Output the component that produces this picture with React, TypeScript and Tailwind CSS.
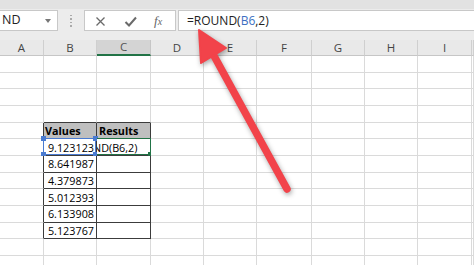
import React from "react";

const cols = ["A", "B", "C", "D", "E", "F", "G", "H", "I", "J"];
const gridCols = "grid grid-rows-1 grid-cols-[44px_53px_54px_53px_53px_55px_53px_53px_54px_1fr]";

const values = ["9.123123", "8.641987", "4.379873", "5.012393", "6.133908", "5.123767"];

function Handle({ pos, color }: { pos: string; color: string }) {
  return <span className={`absolute w-[5px] h-[5px] ${color} ${pos}`} />;
}

function Cell({ r, c }: { r: number; c: number }) {
  const inTableCol = c === 1 || c === 2;
  const darkBottom = inTableCol && r >= 3 && r <= 10;
  const darkRight = c <= 2 && r >= 4 && r <= 10;
  const headerFill = r === 4 && inTableCol;

  let content: React.ReactNode = null;
  if (r === 4 && c === 1) content = <span className="pl-[1px] font-bold">Values</span>;
  if (r === 4 && c === 2) content = <span className="pl-[2px] font-bold">Results</span>;
  if (r >= 5 && r <= 10 && c === 1)
    content = <span className="ml-auto pr-[2px]">{values[r - 5]}</span>;
  if (r === 5 && c === 2) content = <span className="ml-[-4px] whitespace-nowrap">ND(B6,2)</span>;

  return (
    <div
      className={[
        "relative flex min-h-0 items-center overflow-visible border-r border-b text-[10.8px] leading-[15px] text-black",
        darkBottom ? "border-b-[#3c3c3c]" : "border-b-[#dadada]",
        darkRight ? "border-r-[#3c3c3c]" : "border-r-[#dadada]",
        headerFill ? "bg-[#bfbfbf]" : "bg-white",
      ].join(" ")}
    >
      <div className="flex w-full items-center overflow-hidden">{content}</div>
      {r === 5 && c === 1 && (
        <div className="pointer-events-none absolute -left-[1px] -top-[1px] h-[calc(100%+1px)] w-[calc(100%+1px)] border-[1.5px] border-[#4a7bd1]">
          <Handle pos="-left-[3px] -top-[3px]" color="bg-[#4a7bd1]" />
          <Handle pos="-right-[3px] -top-[3px]" color="bg-[#4a7bd1]" />
          <Handle pos="-left-[3px] -bottom-[3px]" color="bg-[#4a7bd1]" />
          <Handle pos="-right-[3px] -bottom-[3px]" color="bg-[#4a7bd1]" />
        </div>
      )}
      {r === 5 && c === 2 && (
        <div className="pointer-events-none absolute left-0 -top-[1px] h-[calc(100%+1px)] w-[calc(100%+1px)] border-[1.5px] border-l-0 border-[#217346]">
          <Handle pos="-right-[3px] -bottom-[3px]" color="bg-[#217346]" />
        </div>
      )}
    </div>
  );
}

export default function App() {
  const rows = Array.from({ length: 13 }, (_, i) => i);

  return (
    <div className="relative h-[265px] w-[474px] overflow-hidden bg-white font-['Open_Sans',sans-serif]">
      {/* Formula bar */}
      <div className="h-[40px] bg-[#ececec]">
        <div className="h-[9px] bg-[#e2e2e2]" />
        <div className="flex h-[22px] items-stretch pt-[1px]">
          <div className="flex w-[58px] items-center justify-between border border-l-0 border-[#c8c8c8] bg-white pl-[2px] pr-[6px]">
            <span className="text-[12.5px] text-[#222]">ND</span>
            <span className="mt-[1px] block h-0 w-0 border-x-[3px] border-t-[4px] border-x-transparent border-t-[#777]" />
          </div>
          <div className="flex w-[26px] flex-col items-center justify-center gap-[2px]">
            <span className="h-[1.5px] w-[1.5px] bg-[#aaa]" />
            <span className="h-[1.5px] w-[1.5px] bg-[#aaa]" />
            <span className="h-[1.5px] w-[1.5px] bg-[#aaa]" />
            <span className="h-[1.5px] w-[1.5px] bg-[#aaa]" />
          </div>
          <div className="flex w-[92px] items-center border border-[#c8c8c8] bg-white">
            <svg width="30" height="20" viewBox="0 0 30 20" className="ml-[1px]">
              <path d="M10.5 6.5 L18.5 14.5 M18.5 6.5 L10.5 14.5" stroke="#6a6a6a" strokeWidth="1.3" />
            </svg>
            <svg width="30" height="20" viewBox="0 0 30 20">
              <path d="M9.5 11 L13 14.5 L20 6.5" stroke="#6a6a6a" strokeWidth="2" fill="none" />
            </svg>
            <span className="ml-[8px] font-['Liberation_Serif',serif] text-[13px] italic text-[#666]">
              f<span className="text-[10px]">x</span>
            </span>
          </div>
          <div className="ml-[2px] flex flex-1 items-center border border-r-0 border-[#c8c8c8] bg-white pl-[8px]">
            <span className="text-[12px] text-[#222]">
              =ROUND(<span className="text-[#3d6fc2]">B6</span>,2)
            </span>
          </div>
        </div>
      </div>

      {/* Column headers */}
      <div className={`${gridCols} h-[16px] bg-[#e9e9e9]`}>
        {cols.map((c, i) => (
          <div
            key={c}
            className={
              i === 2
                ? "flex items-center justify-center border-r border-b-2 border-r-[#c6c6c6] border-b-[#217346] bg-[#d4d4d4] text-[11.5px] leading-[14px] text-[#555]"
                : "flex items-center justify-center border-r border-b border-r-[#cfcfcf] border-b-[#c6c6c6] text-[11.5px] leading-[14px] text-[#444]"
            }
          >
            {c === "J" ? "" : c}
          </div>
        ))}
      </div>

      {/* Sheet body */}
      <div>
        {rows.map((r) => (
          <div key={r} className={`${gridCols} h-[16.67px]`}>
            {cols.map((_, c) => (
              <Cell key={c} r={r} c={c} />
            ))}
          </div>
        ))}
      </div>

      {/* Annotation arrow */}
      <svg
        className="pointer-events-none absolute left-0 top-0"
        width="474"
        height="265"
        viewBox="0 0 474 265"
        style={{ filter: "drop-shadow(1px 2px 2.5px rgba(0,0,0,0.35))" }}
      >
        <line x1="213" y1="54" x2="287" y2="189" stroke="#f2434a" strokeWidth="7.5" strokeLinecap="round" />
        <polygon points="199,30 226,48 201,63" fill="#f2434a" stroke="#f2434a" strokeWidth="2" strokeLinejoin="round" />
      </svg>
    </div>
  );
}
